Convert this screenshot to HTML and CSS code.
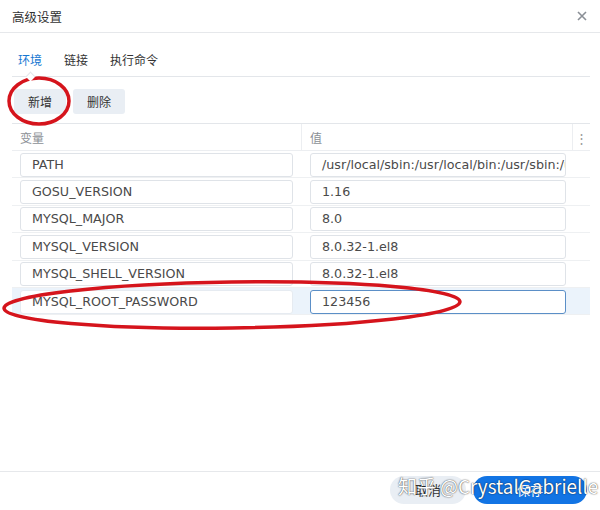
FILE: index.html
```html
<!DOCTYPE html>
<html lang="zh">
<head>
<meta charset="utf-8">
<link rel="stylesheet" href="styles.css">
</head>
<body>
<div class="dialog">
  <div class="header">
    <span class="title">高级设置</span>
    <svg class="close" width="10" height="10" viewBox="0 0 10 10"><path d="M1 1L9 9M9 1L1 9" stroke="#8a8f96" stroke-width="1.6" fill="none"/></svg>
  </div>
  <div class="tabs">
    <span class="tab active">环境</span>
    <span class="tab">链接</span>
    <span class="tab">执行命令</span>
  </div>
  <div class="toolbar">
    <button class="btn">新增</button>
    <button class="btn">删除</button>
  </div>
  <div class="table">
    <div class="thead">
      <div class="c1 th">变量</div>
      <div class="c2 th">值</div>
      <div class="c3 th more">⋮</div>
    </div>
    <div class="row"><div class="c1"><div class="input">PATH</div></div><div class="c2"><div class="input clip">/usr/local/sbin:/usr/local/bin:/usr/sbin:/usr/bin:/sbin:/bin</div></div><div class="c3"></div></div>
    <div class="row"><div class="c1"><div class="input">GOSU_VERSION</div></div><div class="c2"><div class="input">1.16</div></div><div class="c3"></div></div>
    <div class="row"><div class="c1"><div class="input">MYSQL_MAJOR</div></div><div class="c2"><div class="input">8.0</div></div><div class="c3"></div></div>
    <div class="row"><div class="c1"><div class="input">MYSQL_VERSION</div></div><div class="c2"><div class="input">8.0.32-1.el8</div></div><div class="c3"></div></div>
    <div class="row"><div class="c1"><div class="input">MYSQL_SHELL_VERSION</div></div><div class="c2"><div class="input">8.0.32-1.el8</div></div><div class="c3"></div></div>
    <div class="row selected"><div class="c1"><div class="input">MYSQL_ROOT_PASSWORD</div></div><div class="c2"><div class="input focus">123456</div></div><div class="c3"></div></div>
  </div>
  <div class="spacer"></div>
  <div class="footer">
    <button class="pill cancel">取消</button>
    <button class="pill save">保存</button>
  </div>
  <div class="watermark">知乎 @CrystalGabrielle</div>
  <svg class="marks" width="600" height="510" viewBox="0 0 600 510">
    <ellipse cx="39" cy="101" rx="30" ry="23" fill="none" stroke="#d5141c" stroke-width="3.5"/>
    <ellipse cx="232" cy="305" rx="228" ry="23" fill="none" stroke="#d5141c" stroke-width="3.5" transform="rotate(-0.8 232 305)"/>
  </svg>
</div>
</body>
</html>
```

FILE: styles.css
```css
* { box-sizing: border-box; }
html, body { margin: 0; padding: 0; background: #fff; }
body { width: 600px; height: 510px; overflow: hidden; font-family: "DejaVu Sans", "Noto Sans CJK SC", sans-serif; }

.dialog { position: relative; width: 600px; height: 510px; display: flex; flex-direction: column; }

.header { height: 33px; border-bottom: 1px solid #e6e8eb; display: flex; align-items: center; justify-content: space-between; padding: 0 13px 0 12px; }
.title { font-family: "Noto Sans CJK SC", sans-serif; font-size: 12.5px; color: #333; }
.close { display: block; }

.tabs { height: 44px; margin: 0 10px 0 12px; border-bottom: 1px solid #e3e6ea; display: flex; align-items: flex-end; gap: 22px; padding: 0 0 7px 6px; position: relative; }
.tab { font-family: "Noto Sans CJK SC", sans-serif; font-size: 12px; color: #333; line-height: 18px; }
.tab.active { color: #1677d2; position: relative; }
.tab.active::after { content: ""; position: absolute; left: 9px; top: 22px; width: 6px; height: 6px; background: #fff; border-left: 1px solid #e3e6ea; border-top: 1px solid #e3e6ea; transform: rotate(45deg); z-index: 1; }

.toolbar { display: flex; gap: 7px; padding: 12px 0 0 14px; }
.btn { font-family: "Noto Sans CJK SC", sans-serif; font-size: 12px; color: #333; background: #e9eef4; border: none; border-radius: 3px; height: 25px; width: 52px; padding: 0; }

.table { margin: 9px 10px 0 12px; border-top: 1px solid #e3e6ea; }
.thead { display: flex; height: 27px; border-bottom: 1px solid #eceef1; }
.th { font-family: "Noto Sans CJK SC", sans-serif; font-size: 12px; color: #8c9096; display: flex; align-items: center; }
.thead .c1 { padding-left: 8px; border-right: 1px solid #eceef1; }
.thead .c2 { padding-left: 8px; border-right: 1px solid #eceef1; }
.more { justify-content: center; color: #999; font-size: 13px; }

.c1 { width: 290px; padding: 0 9px 0 8px; }
.c2 { width: 271px; padding: 0 7px 0 8px; }
.c3 { width: 17px; }

.row { display: flex; align-items: center; height: 27.4px; border-bottom: 1px solid #eef0f2; }
.row.selected { background: #ebf3fb; }
.input { height: 24px; margin-top: 1px; border: 1px solid #dfe3e8; border-radius: 3px; background: #fff; font-size: 12.7px; color: #4a4a4a; line-height: 22px; padding-left: 11px; white-space: nowrap; overflow: hidden; }
.input.focus { border-color: #5b8fc7; }
.row.selected .c1 .input { border-color: #e6ebf1; }

.spacer { flex: 1; }
.footer { height: 39px; border-top: 1px solid #e6e8eb; display: flex; justify-content: flex-end; align-items: center; gap: 7px; padding: 0 13px 3px 0; }
.pill { font-family: "Noto Sans CJK SC", sans-serif; font-size: 13px; height: 28px; border: none; border-radius: 14px; padding: 0; }
.cancel { width: 76px; background: #e9eef4; color: #333; }
.save { width: 114px; background: #1274e4; color: #fff; }

.watermark { position: absolute; left: 398px; top: 472px; font-family: "Noto Sans CJK SC", sans-serif; font-size: 18.9px; color: #fff; white-space: nowrap; text-shadow: 0 0 1px rgba(0,0,0,0.7), 0 0 2px rgba(0,0,0,0.4); }
.marks { position: absolute; left: 0; top: 0; pointer-events: none; }
```
